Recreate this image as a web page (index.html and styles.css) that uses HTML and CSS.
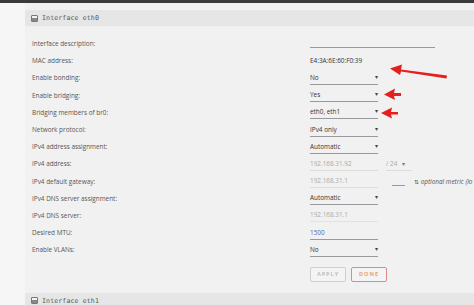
FILE: index.html
```html
<!DOCTYPE html>
<html lang="en">
<head>
    <meta charset="UTF-8">
    <title>Interface eth0</title>
    <link rel="stylesheet" href="styles.css">
</head>
<body>
    <div class="topbar"></div>
    <div class="page">
        <div class="side"></div>
        <div class="main">
            <div class="section-head">
                <span class="head-icon"></span>
                <span>Interface eth0</span>
            </div>

            <div class="form">
                <div class="row">
                    <span class="label">Interface description:</span>
                    <span class="field wide"></span>
                </div>
                <div class="row">
                    <span class="label">MAC address:</span>
                    <span class="field plain">E4:3A:6E:60:F0:39</span>
                </div>
                <div class="row">
                    <span class="label">Enable bonding:</span>
                    <span class="field select">No</span>
                </div>
                <div class="row">
                    <span class="label">Enable bridging:</span>
                    <span class="field select">Yes</span>
                </div>
                <div class="row">
                    <span class="label">Bridging members of br0:</span>
                    <span class="field select">eth0, eth1</span>
                </div>
                <div class="row">
                    <span class="label">Network protocol:</span>
                    <span class="field select">IPv4 only</span>
                </div>
                <div class="row">
                    <span class="label">IPv4 address assignment:</span>
                    <span class="field select">Automatic</span>
                </div>
                <div class="row">
                    <span class="label">IPv4 address:</span>
                    <span class="field disabled">192.168.31.92</span>
                    <span class="prefix">/ 24 <span class="caret">▾</span></span>
                </div>
                <div class="row">
                    <span class="label">IPv4 default gateway:</span>
                    <span class="field disabled">192.168.31.1</span>
                    <span class="metric"></span>
                    <span class="hint">⇅ <em>optional metric (lo</em></span>
                </div>
                <div class="row">
                    <span class="label">IPv4 DNS server assignment:</span>
                    <span class="field select">Automatic</span>
                </div>
                <div class="row">
                    <span class="label">IPv4 DNS server:</span>
                    <span class="field disabled light">192.168.31.1</span>
                </div>
                <div class="row">
                    <span class="label">Desired MTU:</span>
                    <span class="field blue">1500</span>
                </div>
                <div class="row">
                    <span class="label">Enable VLANs:</span>
                    <span class="field select">No</span>
                </div>

                <div class="actions">
                    <button class="btn">APPLY</button>
                    <button class="btn done">DONE</button>
                </div>
            </div>

            <div class="section-head">
                <span class="head-icon"></span>
                <span>Interface eth1</span>
            </div>
        </div>
    </div>

    <!-- annotation arrows drawn over the form -->
    <svg class="arrows" width="474" height="305" viewBox="0 0 474 305">
        <g fill="#e3201b">
            <path d="M447 75.5 L401 69.5 L402 64.5 L390 68.5 L400 75 L401 71.5 L446.5 78.5 Z"/>
            <path d="M401 93 L394 93 L395 88.5 L384 94.5 L395 100 L394 96 L401 96 Z"/>
            <path d="M398 112 L391 112 L392 107.5 L381 113 L392 118.5 L391 114.5 L398 114.5 Z"/>
        </g>
    </svg>
</body>
</html>
```

FILE: styles.css
```css
* {
    margin: 0;
    padding: 0;
    box-sizing: border-box;
}

body {
    width: 474px;
    height: 305px;
    overflow: hidden;
    background: #f2f2f2;
    font-family: 'Open Sans', 'Noto Sans', sans-serif;
    font-size: 6.4px;
    color: #555;
    position: relative;
}

.topbar {
    height: 3px;
    background: #3a3a3a;
}

.page {
    display: flex;
}

.side {
    width: 25px;
    flex-shrink: 0;
    background: #f6f6f6;
}

.main {
    flex: 1;
    min-width: 0;
    padding-top: 7px;
    background: #f1f1f1;
}

.section-head {
    height: 16px;
    display: flex;
    align-items: center;
    gap: 4px;
    padding-left: 6px;
    background: #e6e6e6;
    font-family: 'DejaVu Sans Mono', monospace;
    font-size: 6.6px;
    letter-spacing: 0.1px;
    color: #555;
}

.head-icon {
    width: 7px;
    height: 7px;
    border: 1px solid #777;
    border-radius: 1px;
    background: linear-gradient(#f2f2f2 0 40%, #888 40% 100%);
}

.form {
    padding: 9px 0 11px 7px;
}

.row {
    height: 17.2px;
    display: flex;
    align-items: center;
}

.label {
    width: 278px;
    flex-shrink: 0;
}

.field {
    width: 68px;
    flex-shrink: 0;
    height: 14px;
    line-height: 13px;
    color: #333;
    border-bottom: 1px solid #999;
    position: relative;
}

.field.wide {
    width: 125px;
    height: 9px;
}

.field.plain {
    border-bottom: none;
}

.field.select::after {
    content: '▾';
    position: absolute;
    right: 0;
    top: 0;
    font-size: 6px;
    color: #444;
}

.field.disabled {
    color: #aaa;
    border-bottom-color: #ddd;
}

.field.light {
    border-bottom-color: #e2e2e2;
}

.field.blue {
    color: #4a6cb0;
}

.prefix {
    margin-left: 8px;
    width: 26px;
    flex-shrink: 0;
    height: 14px;
    line-height: 13px;
    color: #aaa;
    border-bottom: 1px solid #ddd;
}

.caret {
    margin-left: 3px;
    font-size: 6px;
    color: #777;
}

.metric {
    margin: 9px 0 0 14px;
    width: 13px;
    flex-shrink: 0;
    height: 1px;
    background: #999;
}

.hint {
    margin-left: 9px;
    white-space: nowrap;
    color: #555;
}

.actions {
    display: flex;
    gap: 5px;
    margin: 8.4px 0 0 278px;
}

.btn {
    width: 36px;
    height: 15px;
    border: 1px solid #cfcfcf;
    border-radius: 2px;
    background: #f4f4f4;
    font-family: 'Open Sans', sans-serif;
    font-size: 5.5px;
    font-weight: bold;
    letter-spacing: 1px;
    color: #c0c0c0;
}

.btn.done {
    border-color: #dc8a8e;
    color: #e9a36b;
}

.arrows {
    position: absolute;
    top: 0;
    left: 0;
}
```
